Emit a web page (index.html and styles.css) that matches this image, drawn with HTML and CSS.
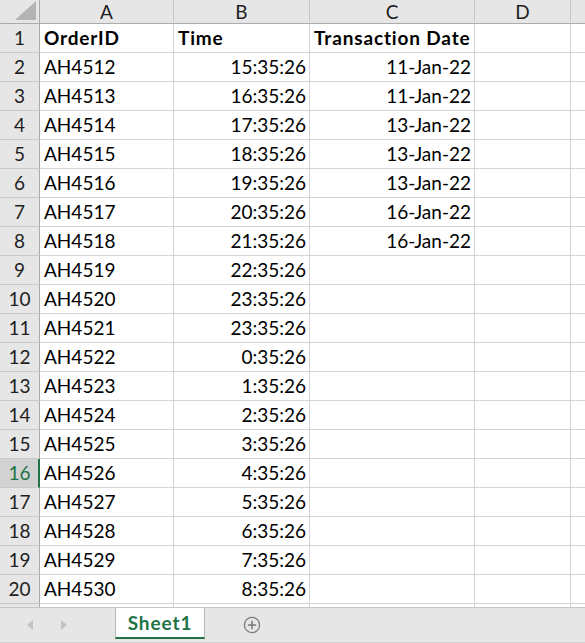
FILE: index.html
```html
<!DOCTYPE html>
<html>
<head>
<meta charset="utf-8">
<link rel="stylesheet" href="styles.css">
</head>
<body>
<div class="sheet">
  <div class="grid">
    <div class="corner"><svg class="tri" width="21" height="19" viewBox="0 0 21 19"><polygon points="21,0 21,19 0,19" fill="#b4b4b4"/></svg></div>
    <div class="ch">A</div><div class="ch">B</div><div class="ch">C</div><div class="ch">D</div><div class="ch last"></div>

    <div class="rh">1</div><div class="c b">OrderID</div><div class="c b">Time</div><div class="c b">Transaction Date</div><div class="c"></div><div class="c last"></div>
    <div class="rh">2</div><div class="c">AH4512</div><div class="c r">15:35:26</div><div class="c r">11-Jan-22</div><div class="c"></div><div class="c last"></div>
    <div class="rh">3</div><div class="c">AH4513</div><div class="c r">16:35:26</div><div class="c r">11-Jan-22</div><div class="c"></div><div class="c last"></div>
    <div class="rh">4</div><div class="c">AH4514</div><div class="c r">17:35:26</div><div class="c r">13-Jan-22</div><div class="c"></div><div class="c last"></div>
    <div class="rh">5</div><div class="c">AH4515</div><div class="c r">18:35:26</div><div class="c r">13-Jan-22</div><div class="c"></div><div class="c last"></div>
    <div class="rh">6</div><div class="c">AH4516</div><div class="c r">19:35:26</div><div class="c r">13-Jan-22</div><div class="c"></div><div class="c last"></div>
    <div class="rh">7</div><div class="c">AH4517</div><div class="c r">20:35:26</div><div class="c r">16-Jan-22</div><div class="c"></div><div class="c last"></div>
    <div class="rh">8</div><div class="c">AH4518</div><div class="c r">21:35:26</div><div class="c r">16-Jan-22</div><div class="c"></div><div class="c last"></div>
    <div class="rh">9</div><div class="c">AH4519</div><div class="c r">22:35:26</div><div class="c"></div><div class="c"></div><div class="c last"></div>
    <div class="rh">10</div><div class="c">AH4520</div><div class="c r">23:35:26</div><div class="c"></div><div class="c"></div><div class="c last"></div>
    <div class="rh">11</div><div class="c">AH4521</div><div class="c r">23:35:26</div><div class="c"></div><div class="c"></div><div class="c last"></div>
    <div class="rh">12</div><div class="c">AH4522</div><div class="c r">0:35:26</div><div class="c"></div><div class="c"></div><div class="c last"></div>
    <div class="rh">13</div><div class="c">AH4523</div><div class="c r">1:35:26</div><div class="c"></div><div class="c"></div><div class="c last"></div>
    <div class="rh">14</div><div class="c">AH4524</div><div class="c r">2:35:26</div><div class="c"></div><div class="c"></div><div class="c last"></div>
    <div class="rh">15</div><div class="c">AH4525</div><div class="c r">3:35:26</div><div class="c"></div><div class="c"></div><div class="c last"></div>
    <div class="rh sel">16</div><div class="c">AH4526</div><div class="c r">4:35:26</div><div class="c"></div><div class="c"></div><div class="c last"></div>
    <div class="rh">17</div><div class="c">AH4527</div><div class="c r">5:35:26</div><div class="c"></div><div class="c"></div><div class="c last"></div>
    <div class="rh">18</div><div class="c">AH4528</div><div class="c r">6:35:26</div><div class="c"></div><div class="c"></div><div class="c last"></div>
    <div class="rh">19</div><div class="c">AH4529</div><div class="c r">7:35:26</div><div class="c"></div><div class="c"></div><div class="c last"></div>
    <div class="rh">20</div><div class="c">AH4530</div><div class="c r">8:35:26</div><div class="c"></div><div class="c"></div><div class="c last"></div>
    <div class="rh"></div><div class="c"></div><div class="c"></div><div class="c"></div><div class="c"></div><div class="c last"></div>
  </div>
  <div class="tabbar">
    <div class="nav">
      <svg class="arrow" width="6" height="10" viewBox="0 0 6 10"><polygon points="6,0 6,10 0,5" fill="#c3c3c3"/></svg>
      <svg class="arrow" width="6" height="10" viewBox="0 0 6 10"><polygon points="0,0 0,10 6,5" fill="#c3c3c3"/></svg>
    </div>
    <div class="tab">Sheet1</div>
    <div class="add">
      <svg width="18" height="18" viewBox="0 0 18 18"><circle cx="9" cy="9" r="7.6" fill="none" stroke="#7a7a7a" stroke-width="1.3"/><path d="M9 4.8V13.2M4.8 9H13.2" stroke="#7a7a7a" stroke-width="1.5"/></svg>
    </div>
  </div>
</div>
</body>
</html>
```

FILE: styles.css
```css
html, body {
  margin: 0;
  padding: 0;
  background: #ffffff;
}
body {
  width: 585px;
  height: 643px;
  overflow: hidden;
  font-family: Lato, "Open Sans", "Liberation Sans", sans-serif;
  font-size: 19px;
  color: #000;
}
.sheet {
  display: flex;
  flex-direction: column;
  height: 643px;
}
.grid {
  height: 607px;
  overflow: hidden;
  display: grid;
  grid-template-columns: 40px 134px 136px 165px 96px 1fr;
  grid-template-rows: 24px;
  grid-auto-rows: 29px;
}
.grid > div {
  box-sizing: border-box;
  white-space: nowrap;
  overflow: hidden;
}
.corner {
  background: #e6e6e6;
  border-right: 1px solid #ababab;
  border-bottom: 1px solid #ababab;
  display: flex;
  justify-content: flex-end;
  align-items: flex-end;
  padding: 0 3px 3px 0;
}
.tri {
  display: block;
}
.ch {
  background: #e6e6e6;
  border-right: 1px solid #c6c6c6;
  border-bottom: 1px solid #ababab;
  text-align: center;
  line-height: 23px;
  color: #1f1f1f;
}
.rh {
  background: #e6e6e6;
  border-right: 1px solid #ababab;
  border-bottom: 1px solid #c9c9c9;
  text-align: center;
  line-height: 28px;
  color: #1f1f1f;
}
.rh.sel {
  background: #d2d2d2;
  color: #217346;
  border-right: 2px solid #217346;
  padding-left: 1px;
}
.c {
  border-right: 1px solid #d4d4d4;
  border-bottom: 1px solid #d4d4d4;
  line-height: 28px;
  padding: 0 3px 0 4px;
}
.last {
  border-right: none;
}
.r {
  text-align: right;
}
.b {
  font-weight: bold;
  letter-spacing: 0.85px;
}
.tabbar {
  flex: 1;
  background: #e6e6e6;
  border-top: 1px solid #c6c6c6;
  border-bottom: 1px solid #d0d0d0;
  display: flex;
  align-items: flex-start;
}
.nav {
  width: 115px;
  height: 30px;
  display: flex;
  align-items: center;
  padding-left: 27px;
  box-sizing: border-box;
  gap: 28px;
}
.arrow {
  display: block;
  margin-top: 4px;
}
.tab {
  box-sizing: border-box;
  width: 90px;
  height: 31px;
  background: #ffffff;
  border-left: 1px solid #b8b8b8;
  border-right: 1px solid #b8b8b8;
  border-bottom: 2px solid #217346;
  color: #217346;
  font-weight: bold;
  text-align: center;
  line-height: 29px;
  letter-spacing: 0.9px;
}
.add {
  height: 31px;
  display: flex;
  align-items: center;
  padding-left: 38px;
}
.add svg {
  display: block;
  margin-top: 2px;
}
```
